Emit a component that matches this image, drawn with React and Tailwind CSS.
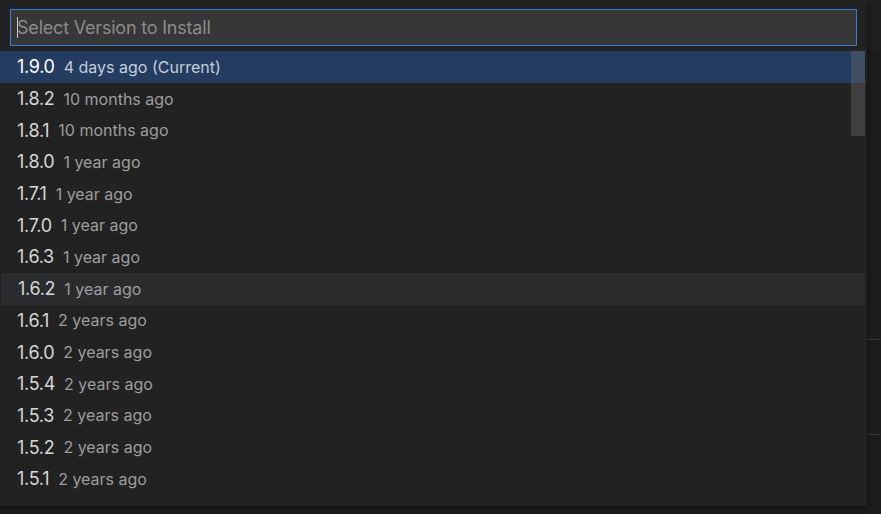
import React from "react";

const versions = [
  { v: "1.9.0", when: "4 days ago (Current)" },
  { v: "1.8.2", when: "10 months ago" },
  { v: "1.8.1", when: "10 months ago" },
  { v: "1.8.0", when: "1 year ago" },
  { v: "1.7.1", when: "1 year ago" },
  { v: "1.7.0", when: "1 year ago" },
  { v: "1.6.3", when: "1 year ago" },
  { v: "1.6.2", when: "1 year ago" },
  { v: "1.6.1", when: "2 years ago" },
  { v: "1.6.0", when: "2 years ago" },
  { v: "1.5.4", when: "2 years ago" },
  { v: "1.5.3", when: "2 years ago" },
  { v: "1.5.2", when: "2 years ago" },
  { v: "1.5.1", when: "2 years ago" },
];

export default function App() {
  const selected = 0;
  const hovered = 7;

  return (
    <div
      className="w-[881px] h-[514px] bg-[#1b1b1b] flex overflow-hidden"
      style={{ fontFamily: "Inter, 'Noto Sans', sans-serif" }}
    >
      {/* quick pick panel */}
      <div className="w-[867px] h-[506px] bg-[#222222] shadow-[0_0_6px_rgba(0,0,0,0.5)] flex flex-col relative z-10">
        <div className="px-[10px] pt-[9px] pb-[5px]">
          <div className="h-[37px] bg-[#373737] border border-[#3b79d9] flex items-center pl-[6px]">
            <span className="w-px h-[21px] bg-[#cccccc]" />
            <span className="text-[18px] text-[#8b8b8b] tracking-[-0.2px] -ml-px">Select Version to Install</span>
          </div>
        </div>

        <div className="relative flex-1">
          <ul>
            {versions.map((item, i) => (
              <li
                key={item.v}
                className={`h-[31.7px] flex items-center pl-[17px] gap-[9px] ${
                  i === selected
                    ? "bg-[#233c60] mr-[2px]"
                    : i === hovered
                    ? "bg-[#2a2b2d] ml-[1px] pl-[16px] mr-[2px]"
                    : ""
                }`}
              >
                <span className={`text-[18px] tracking-[-0.3px] ${i === selected ? "text-white" : "text-[#d6d6d6]"}`}>{item.v}</span>
                <span className={`text-[16px] ${i === selected ? "text-[#c5cedb]" : "text-[#9d9d9d]"}`}>{item.when}</span>
              </li>
            ))}
          </ul>
          {/* scrollbar thumb */}
          <div className="absolute top-0 right-[2px] w-[14px] h-[85px] bg-[rgba(100,100,100,0.45)]" />
        </div>
      </div>

      {/* editor edge behind */}
      <div className="flex-1 flex flex-col">
        <div className="h-[50px] bg-[#202020]" />
        <div className="h-[290px] bg-[#1c1c1c] border-b border-[#3a3a3a]" />
        <div className="h-[95px] bg-[#1c1c1c] border-b border-[#3a3a3a]" />
        <div className="flex-1 bg-[#1c1c1c]" />
      </div>
    </div>
  );
}
